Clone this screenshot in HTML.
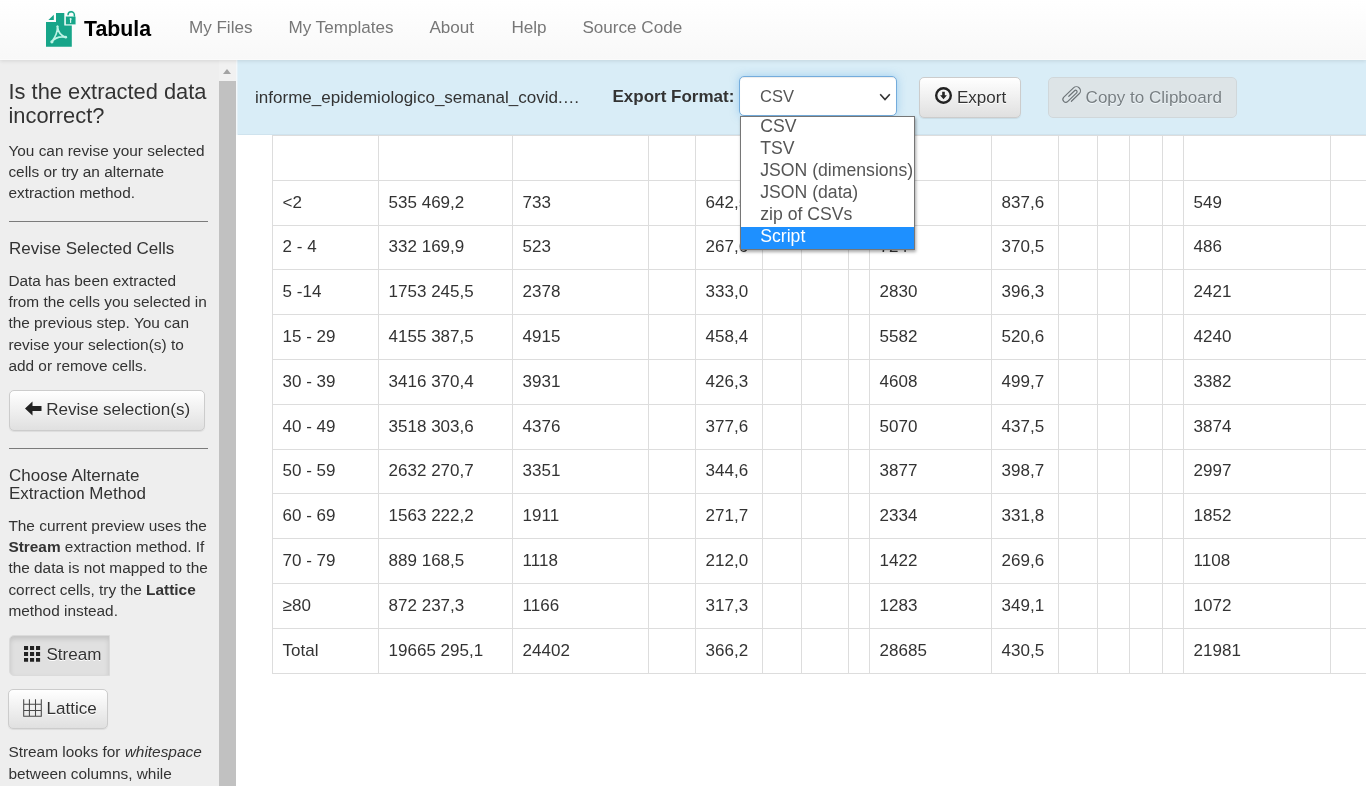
<!DOCTYPE html>
<html lang="en">
<head>
<meta charset="utf-8">
<title>Tabula</title>
<style>
*{box-sizing:border-box}
html,body{margin:0;padding:0}
#nav,#side,#bar,#dd,#tbl{will-change:transform}
body{width:1366px;height:786px;overflow:hidden;position:relative;background:#fff;color:#333;
 font-family:"Liberation Sans",Arial,sans-serif;font-size:16.8px;line-height:24px}
/* ---------- navbar ---------- */
#nav{position:absolute;left:0;top:0;width:1366px;height:60px;z-index:5;
 background:linear-gradient(#fff 0,#f8f8f8 100%);border-bottom:1px solid #fbfbfb;
 box-shadow:0 1px 4px rgba(0,0,0,.11)}
#logo{position:absolute;left:45px;top:9px;width:34px;height:40px}
#brand{position:absolute;left:84px;top:16.6px;font-size:21.3px;font-weight:bold;color:#000;line-height:24px;letter-spacing:0}
.nl{position:absolute;top:15.7px;margin-left:.4px;font-size:17.1px;color:#777;line-height:24px;white-space:nowrap}
/* ---------- sidebar ---------- */
#side{position:absolute;left:0;top:60px;width:219px;height:726px;background:#eee}
#side .t{position:absolute;left:9px;white-space:nowrap;color:#333}
#side h1{margin:0;font-weight:normal;font-size:21.85px;line-height:23.7px;position:absolute;left:8.5px;top:20px;color:#333;white-space:nowrap}
#side h2{margin:0;font-weight:normal;font-size:17px;line-height:18.2px;position:absolute;left:9px;color:#333;white-space:nowrap}
#side p{margin:-0.4px 0 0;font-size:15.4px;line-height:21.4px;position:absolute;left:8.4px;color:#333;white-space:nowrap}
#side hr{position:absolute;left:9px;width:199px;height:1px;border:0;margin:0;background:#7b7b7b}
.btn{position:absolute;border:1px solid #ccc;border-radius:5px;background:linear-gradient(#fff 0,#e0e0e0 100%);
 box-shadow:inset 0 1px 0 rgba(255,255,255,.15),0 1px 1px rgba(0,0,0,.075);color:#333;font-size:17.05px;white-space:nowrap;
 text-shadow:0 1px 0 #fff}
.btn.active{background:#e0e0e0;border-color:#dbdbdb;box-shadow:inset 0 3px 5px rgba(0,0,0,.125)}
.btn span{position:absolute;line-height:24px}
/* ---------- scrollbar ---------- */
#sb{position:absolute;left:219px;top:60px;width:17px;height:726px;background:#f1f1f1}
#sb i{position:absolute;left:0;top:20.5px;width:17px;height:706px;background:#c1c1c1}
#sb b{position:absolute;left:4.4px;top:9px;width:0;height:0;border-left:4.4px solid transparent;border-right:4.4px solid transparent;border-bottom:5px solid #a3a3a3}
/* ---------- header bar ---------- */
#bar{position:absolute;left:236px;top:60px;width:1130px;height:75px;background:#d9edf7;border-bottom:1px solid #cfe3ee}
#fname{position:absolute;left:19px;top:26.4px;font-size:17.05px;line-height:24px;color:#333;white-space:nowrap}
#elabel{position:absolute;left:376.5px;top:25.2px;font-size:17px;line-height:24px;font-weight:bold;color:#333;white-space:nowrap}
#sel{position:absolute;left:503px;top:16px;width:157.5px;height:40px;background:#fff;border:1px solid #74acdc;border-radius:5px;
 box-shadow:inset 0 1px 1px rgba(0,0,0,.075),0 0 8px rgba(102,175,233,.5)}
#sel span{position:absolute;left:20px;top:7px;font-size:16.5px;line-height:24px;color:#555}
#sel svg{position:absolute;right:5px;top:15.5px}
/* ---------- dropdown ---------- */
#dd{position:absolute;left:740px;top:116px;width:175px;height:134px;background:#fff;border:1px solid #767676;z-index:9;
 box-shadow:1px 2px 3px rgba(0,0,0,.35)}
#dd div{height:22px;line-height:18px;font-size:17.65px;color:#555;padding-left:19.2px;white-space:nowrap}
#dd div.on{background:#1e90ff;color:#fff}
/* ---------- table ---------- */
#tbl{position:absolute;left:272px;top:135px;border-collapse:collapse;table-layout:fixed;width:1200px}
#tbl td{border:1px solid #ddd;height:44.8px;padding:0 0 0 9.6px;font-size:17px;line-height:24px;color:#333;white-space:nowrap;overflow:hidden;vertical-align:middle}
</style>
</head>
<body>

<div id="nav">
  <svg id="logo" viewBox="0 0 34 40">
    <path d="M11 4 H19.3 V16.6 H26.8 V37.7 H1 V12.9 H11 Z" fill="#17a589"/>
    <path d="M3.4 11 H8.8 V5.7 Z" fill="#17a589"/>
    <rect x="20.3" y="7" width="10.8" height="8.9" fill="#d9f8f0"/>
    <rect x="20.9" y="7.6" width="9.6" height="7.7" fill="#17a589"/>
    <path d="M23.05 5.9 V5.85 A3.15 3.15 0 0 1 29.35 5.85 V7.6" fill="none" stroke="#d9f8f0" stroke-width="2.4"/>
    <path d="M23.05 6.2 V5.85 A3.15 3.15 0 0 1 29.35 5.85 V7.8" fill="none" stroke="#17a589" stroke-width="1.4"/>
    <path d="M12.5 17.4 C12.7 22.5 11.4 26.5 6.9 32.7 M12.5 17.4 C13 22.8 15.2 26.4 20.6 28.2 M6.9 32.7 C10.2 28.6 15.3 27.2 20.6 28.2" fill="none" stroke="#bdf3e5" stroke-width="1.7" stroke-linecap="round"/>
    <circle cx="12.5" cy="17.5" r="1.1" fill="#bdf3e5"/><circle cx="6.9" cy="32.8" r="1.6" fill="#bdf3e5"/><circle cx="20.7" cy="28.2" r="1.4" fill="#bdf3e5"/>
    <circle cx="25.6" cy="9.9" r="1" fill="#d9f8f0"/><rect x="25" y="9.9" width="1.2" height="4" fill="#d9f8f0"/>
  </svg>
  <div id="brand">Tabula</div>
  <div class="nl" style="left:188.5px">My Files</div>
  <div class="nl" style="left:288px">My Templates</div>
  <div class="nl" style="left:429px">About</div>
  <div class="nl" style="left:511px">Help</div>
  <div class="nl" style="left:582px">Source Code</div>
</div>

<div id="side">
  <h1>Is the extracted data<br>incorrect?</h1>
  <p style="top:80px">You can revise your selected<br>cells or try an alternate<br>extraction method.</p>
  <hr style="top:161px">
  <h2 style="top:180px">Revise Selected Cells</h2>
  <p style="top:210px">Data has been extracted<br>from the cells you selected in<br>the previous step. You can<br>revise your selection(s) to<br>add or remove cells.</p>
  <div class="btn" style="left:9px;top:330px;width:196px;height:41px">
    <svg style="position:absolute;left:15px;top:10.3px" width="17" height="15" viewBox="0 0 17 15"><path d="M0 7.5 L7.5 0.5 V5 H16.5 V10 H7.5 V14.5 Z" fill="#222"/></svg>
    <span style="left:36.3px;top:6.6px">Revise selection(s)</span>
  </div>
  <hr style="top:388px">
  <h2 style="top:407px">Choose Alternate<br>Extraction Method</h2>
  <p style="top:455px">The current preview uses the<br><b>Stream</b> extraction method. If<br>the data is not mapped to the<br>correct cells, try the <b>Lattice</b><br>method instead.</p>
  <div class="btn active" style="border-radius:5px 0 0 5px;left:9.3px;top:575.2px;width:100.3px;height:40.4px">
    <svg style="position:absolute;left:13.9px;top:9.7px" width="17" height="17" viewBox="0 0 17 17" fill="#222"><path d="M0 0h4.1v3.9H0zM6 0h4.1v3.9H6zM12 0h4.1v3.9H12zM0 6h4.1v3.9H0zM6 6h4.1v3.9H6zM12 6h4.1v3.9H12zM0 11.9h4.1v3.9H0zM6 11.9h4.1v3.9H6zM12 11.9h4.1v3.9H12z"/></svg>
    <span style="left:36.2px;top:6.6px">Stream</span>
  </div>
  <div class="btn" style="left:8.3px;top:628.8px;width:99.3px;height:40.7px">
    <svg style="position:absolute;left:13.7px;top:9.2px" width="20" height="19" viewBox="0 0 20 19" fill="none" stroke="#484848" stroke-width="1.05"><path d="M.7 .2V17.8M6.4 .2V17.8M12.5 .2V17.8M18.3 .2V17.8M.7 5.3H18.3M.7 11.4H18.3M.2 17.3H18.8"/></svg>
    <span style="left:37.2px;top:7.3px">Lattice</span>
  </div>
  <p style="top:681.8px">Stream looks for <i>whitespace</i><br>between columns, while</p>
</div>

<div id="sb"><b></b><i></i></div>

<div id="bar">
  <div style="position:absolute;left:0;top:0;width:2px;height:75px;background:linear-gradient(to right,#f3f8fb 0,#f3f8fb 50%,#e4f1f8 50%)"></div>
  <div id="fname">informe_epidemiologico_semanal_covid.…</div>
  <div id="elabel">Export Format:</div>
  <div id="sel"><span>CSV</span>
    <svg width="12" height="9" viewBox="0 0 12 9"><path d="M1.2 1.3 L6 6.6 L10.8 1.3" fill="none" stroke="#333" stroke-width="1.6"/></svg>
  </div>
  <div class="btn" style="left:683.4px;top:16.8px;width:101.6px;height:41.6px">
    <svg style="position:absolute;left:14.9px;top:9.2px" width="17" height="17" viewBox="0 0 17 17"><circle cx="8.5" cy="8.5" r="7.3" fill="none" stroke="#222" stroke-width="2.4"/><path d="M7.2 4.8H9.8V8.2H11.9L8.5 12.2L5.1 8.2H7.2Z" fill="#222"/></svg>
    <span style="left:36.5px;top:7.8px">Export</span>
  </div>
  <div class="btn" style="left:811.6px;top:16.8px;width:189.6px;height:41.6px;opacity:.65;background:#e0e0e0;box-shadow:none;border-color:#ccc">
    <svg style="position:absolute;left:11.6px;top:5.4px" width="24" height="24" viewBox="-12 -12 24 24"><g transform="rotate(-44)"><path d="M-4.8 4.1 L6 4.1 A4.1 4.1 0 0 0 6 -4.1 L-7.4 -4.1 A2.9 2.9 0 0 0 -7.4 1.7 L4.8 1.7 A1.5 1.5 0 0 0 4.8 -1.3 L-3.2 -1.3" fill="none" stroke="#333" stroke-width="1.15" stroke-linecap="round"/></g></svg>
    <span style="left:37px;top:8.2px;color:#444">Copy to Clipboard</span>
  </div>
</div>

<div id="dd">
  <div>CSV</div><div>TSV</div><div>JSON (dimensions)</div><div>JSON (data)</div><div>zip of CSVs</div><div class="on">Script</div>
</div>

<table id="tbl">
<colgroup>
<col style="width:106px"><col style="width:134px"><col style="width:136px"><col style="width:47px"><col style="width:67px"><col style="width:39px"><col style="width:47px"><col style="width:21px"><col style="width:122px"><col style="width:67px"><col style="width:39px"><col style="width:32px"><col style="width:33px"><col style="width:21px"><col style="width:147px"><col style="width:141px">
</colgroup>
<tbody>
<tr><td></td><td></td><td></td><td></td><td></td><td></td><td></td><td></td><td></td><td></td><td></td><td></td><td></td><td></td><td></td><td></td></tr>
<tr><td>&lt;2</td><td>535 469,2</td><td>733</td><td></td><td>642,5</td><td></td><td></td><td></td><td>823</td><td>837,6</td><td></td><td></td><td></td><td></td><td>549</td><td></td></tr>
<tr><td>2 - 4</td><td>332 169,9</td><td>523</td><td></td><td>267,6</td><td></td><td></td><td></td><td>724</td><td>370,5</td><td></td><td></td><td></td><td></td><td>486</td><td></td></tr>
<tr><td>5 -14</td><td>1753 245,5</td><td>2378</td><td></td><td>333,0</td><td></td><td></td><td></td><td>2830</td><td>396,3</td><td></td><td></td><td></td><td></td><td>2421</td><td></td></tr>
<tr><td>15 - 29</td><td>4155 387,5</td><td>4915</td><td></td><td>458,4</td><td></td><td></td><td></td><td>5582</td><td>520,6</td><td></td><td></td><td></td><td></td><td>4240</td><td></td></tr>
<tr><td>30 - 39</td><td>3416 370,4</td><td>3931</td><td></td><td>426,3</td><td></td><td></td><td></td><td>4608</td><td>499,7</td><td></td><td></td><td></td><td></td><td>3382</td><td></td></tr>
<tr><td>40 - 49</td><td>3518 303,6</td><td>4376</td><td></td><td>377,6</td><td></td><td></td><td></td><td>5070</td><td>437,5</td><td></td><td></td><td></td><td></td><td>3874</td><td></td></tr>
<tr><td>50 - 59</td><td>2632 270,7</td><td>3351</td><td></td><td>344,6</td><td></td><td></td><td></td><td>3877</td><td>398,7</td><td></td><td></td><td></td><td></td><td>2997</td><td></td></tr>
<tr><td>60 - 69</td><td>1563 222,2</td><td>1911</td><td></td><td>271,7</td><td></td><td></td><td></td><td>2334</td><td>331,8</td><td></td><td></td><td></td><td></td><td>1852</td><td></td></tr>
<tr><td>70 - 79</td><td>889 168,5</td><td>1118</td><td></td><td>212,0</td><td></td><td></td><td></td><td>1422</td><td>269,6</td><td></td><td></td><td></td><td></td><td>1108</td><td></td></tr>
<tr><td>≥80</td><td>872 237,3</td><td>1166</td><td></td><td>317,3</td><td></td><td></td><td></td><td>1283</td><td>349,1</td><td></td><td></td><td></td><td></td><td>1072</td><td></td></tr>
<tr><td>Total</td><td>19665 295,1</td><td>24402</td><td></td><td>366,2</td><td></td><td></td><td></td><td>28685</td><td>430,5</td><td></td><td></td><td></td><td></td><td>21981</td><td></td></tr>
</tbody>
</table>

</body>
</html>
